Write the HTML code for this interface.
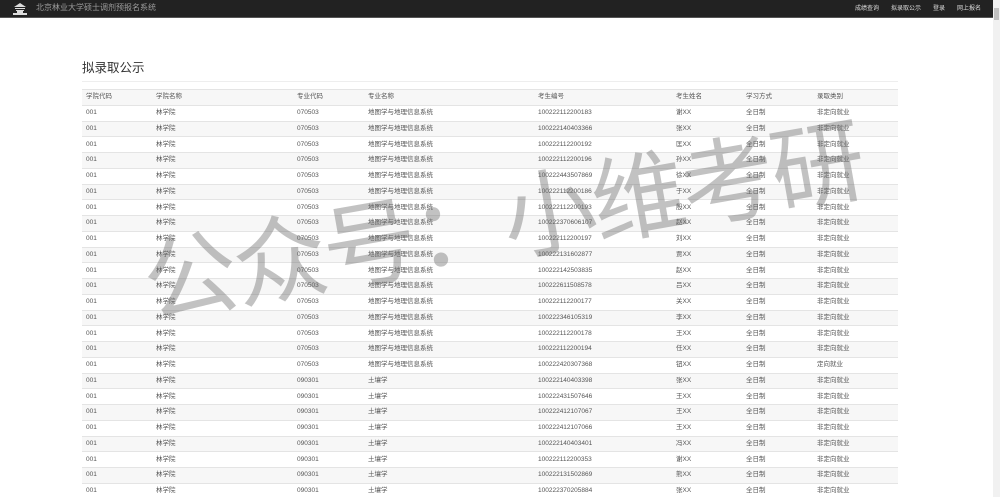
<!DOCTYPE html>
<html><head><meta charset="utf-8"><style>
*{margin:0;padding:0;box-sizing:border-box}
body{width:1000px;height:497px;overflow:hidden;background:#fff;font-family:"Liberation Sans","Noto Sans CJK SC",sans-serif;color:#333;position:relative}
.nav{position:absolute;left:0;top:0;width:993px;height:18px;background:#222;border-bottom:1px solid #555}
.nav .brand{position:absolute;left:36px;top:3px;font-size:8px;line-height:10px;color:#9d9d9d}
.nav .links{position:absolute;right:12px;top:5px;font-size:6px;line-height:8px;color:#ddd}
.nav .links span{margin-left:12px}
.logo{position:absolute;left:12px;top:3px}
.sb{position:absolute;right:0;top:0;width:7px;height:497px;background:#f1f1f1}
.sb i{position:absolute;left:1px;top:8px;width:5px;height:12px;background:#c1c1c1}
h1{position:absolute;left:82px;top:60px;font-size:12.5px;line-height:16px;font-weight:normal;color:#333}
.hr{position:absolute;left:82px;top:81px;width:816px;border-top:1px solid #eee}
table{position:absolute;left:82px;top:89px;width:816px;border-collapse:collapse;font-size:6.5px;line-height:8px;color:#555}
td{height:15.75px;border-top:1px solid #e4e4e4;padding-left:4px;white-space:nowrap;vertical-align:middle}
tr:nth-child(odd){background:#f7f7f7}
.wm{position:absolute;left:135px;top:232px;font-size:94px;line-height:94px;color:rgba(110,110,110,0.42);transform:rotate(-10deg);transform-origin:left top;letter-spacing:-3px;white-space:nowrap;font-family:"Noto Sans CJK SC",sans-serif;font-weight:normal;pointer-events:none}
</style></head><body>
<div class="nav">
<svg class="logo" width="16" height="12" viewBox="0 0 16 12"><path d="M8 0L2 4h12z M3 5h10v1H3z M4 7h8v1H4z M1 10h14v2H1z M5 8h6v2H5z" fill="#ddd"/></svg>
<div class="brand">北京林业大学硕士调剂预报名系统</div>
<div class="links"><span>成绩查询</span><span>拟录取公示</span><span>登录</span><span>网上报名</span></div>
</div>
<div class="sb"><i></i></div>
<h1>拟录取公示</h1>
<div class="hr"></div>
<table>
<colgroup><col style="width:70px"><col style="width:141px"><col style="width:71px"><col style="width:170px"><col style="width:138px"><col style="width:70px"><col style="width:71px"><col></colgroup>
<tr><td>学院代码</td><td>学院名称</td><td>专业代码</td><td>专业名称</td><td>考生编号</td><td>考生姓名</td><td>学习方式</td><td>录取类别</td></tr>
<tr style="background:#fff"><td>001</td><td>林学院</td><td>070503</td><td>地图学与地理信息系统</td><td>100222112200183</td><td>谢XX</td><td>全日制</td><td>非定向就业</td></tr>
<tr><td>001</td><td>林学院</td><td>070503</td><td>地图学与地理信息系统</td><td>100222140403366</td><td>张XX</td><td>全日制</td><td>非定向就业</td></tr>
<tr style="background:#fff"><td>001</td><td>林学院</td><td>070503</td><td>地图学与地理信息系统</td><td>100222112200192</td><td>匡XX</td><td>全日制</td><td>非定向就业</td></tr>
<tr><td>001</td><td>林学院</td><td>070503</td><td>地图学与地理信息系统</td><td>100222112200196</td><td>孙XX</td><td>全日制</td><td>非定向就业</td></tr>
<tr style="background:#fff"><td>001</td><td>林学院</td><td>070503</td><td>地图学与地理信息系统</td><td>100222443507869</td><td>徐XX</td><td>全日制</td><td>非定向就业</td></tr>
<tr><td>001</td><td>林学院</td><td>070503</td><td>地图学与地理信息系统</td><td>100222112200186</td><td>于XX</td><td>全日制</td><td>非定向就业</td></tr>
<tr style="background:#fff"><td>001</td><td>林学院</td><td>070503</td><td>地图学与地理信息系统</td><td>100222112200193</td><td>殷XX</td><td>全日制</td><td>非定向就业</td></tr>
<tr><td>001</td><td>林学院</td><td>070503</td><td>地图学与地理信息系统</td><td>100222370606107</td><td>赵XX</td><td>全日制</td><td>非定向就业</td></tr>
<tr style="background:#fff"><td>001</td><td>林学院</td><td>070503</td><td>地图学与地理信息系统</td><td>100222112200197</td><td>刘XX</td><td>全日制</td><td>非定向就业</td></tr>
<tr><td>001</td><td>林学院</td><td>070503</td><td>地图学与地理信息系统</td><td>100222131602877</td><td>贾XX</td><td>全日制</td><td>非定向就业</td></tr>
<tr style="background:#fff"><td>001</td><td>林学院</td><td>070503</td><td>地图学与地理信息系统</td><td>100222142503835</td><td>赵XX</td><td>全日制</td><td>非定向就业</td></tr>
<tr><td>001</td><td>林学院</td><td>070503</td><td>地图学与地理信息系统</td><td>100222611508578</td><td>吕XX</td><td>全日制</td><td>非定向就业</td></tr>
<tr style="background:#fff"><td>001</td><td>林学院</td><td>070503</td><td>地图学与地理信息系统</td><td>100222112200177</td><td>关XX</td><td>全日制</td><td>非定向就业</td></tr>
<tr><td>001</td><td>林学院</td><td>070503</td><td>地图学与地理信息系统</td><td>100222346105319</td><td>李XX</td><td>全日制</td><td>非定向就业</td></tr>
<tr style="background:#fff"><td>001</td><td>林学院</td><td>070503</td><td>地图学与地理信息系统</td><td>100222112200178</td><td>王XX</td><td>全日制</td><td>非定向就业</td></tr>
<tr><td>001</td><td>林学院</td><td>070503</td><td>地图学与地理信息系统</td><td>100222112200194</td><td>任XX</td><td>全日制</td><td>非定向就业</td></tr>
<tr style="background:#fff"><td>001</td><td>林学院</td><td>070503</td><td>地图学与地理信息系统</td><td>100222420307368</td><td>钮XX</td><td>全日制</td><td>定向就业</td></tr>
<tr><td>001</td><td>林学院</td><td>090301</td><td>土壤学</td><td>100222140403398</td><td>张XX</td><td>全日制</td><td>非定向就业</td></tr>
<tr style="background:#fff"><td>001</td><td>林学院</td><td>090301</td><td>土壤学</td><td>100222431507646</td><td>王XX</td><td>全日制</td><td>非定向就业</td></tr>
<tr><td>001</td><td>林学院</td><td>090301</td><td>土壤学</td><td>100222412107067</td><td>王XX</td><td>全日制</td><td>非定向就业</td></tr>
<tr style="background:#fff"><td>001</td><td>林学院</td><td>090301</td><td>土壤学</td><td>100222412107066</td><td>王XX</td><td>全日制</td><td>非定向就业</td></tr>
<tr><td>001</td><td>林学院</td><td>090301</td><td>土壤学</td><td>100222140403401</td><td>冯XX</td><td>全日制</td><td>非定向就业</td></tr>
<tr style="background:#fff"><td>001</td><td>林学院</td><td>090301</td><td>土壤学</td><td>100222112200353</td><td>谢XX</td><td>全日制</td><td>非定向就业</td></tr>
<tr><td>001</td><td>林学院</td><td>090301</td><td>土壤学</td><td>100222131502869</td><td>熊XX</td><td>全日制</td><td>非定向就业</td></tr>
<tr style="background:#fff"><td>001</td><td>林学院</td><td>090301</td><td>土壤学</td><td>100222370205884</td><td>张XX</td><td>全日制</td><td>非定向就业</td></tr>
</table>
<div class="wm">公众号：小维考研</div>
</body></html>
